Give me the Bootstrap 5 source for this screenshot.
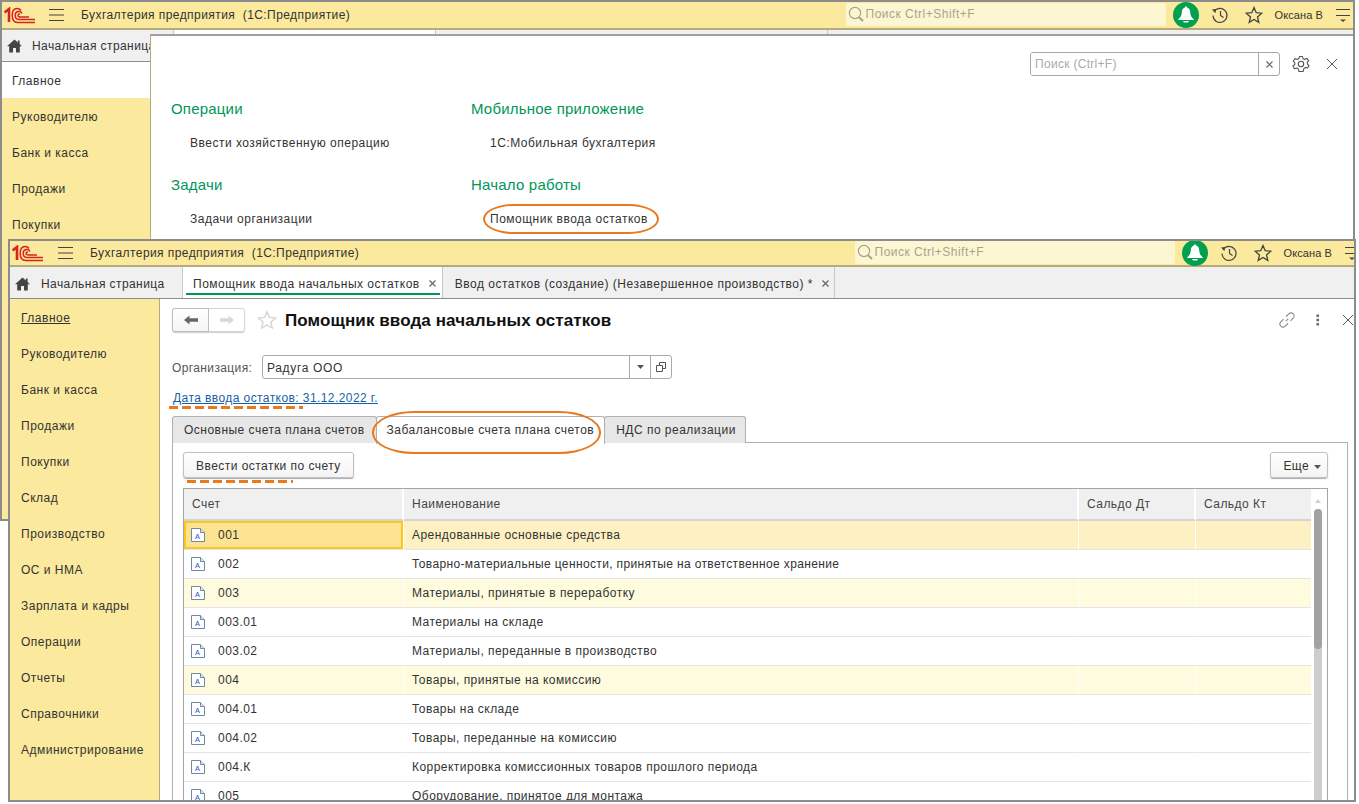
<!DOCTYPE html>
<html lang="ru">
<head>
<meta charset="utf-8">
<title>1С</title>
<link href="https://cdn.jsdelivr.net/npm/bootstrap@5.3.0/dist/css/bootstrap.min.css" rel="stylesheet">
<style>
html,body{height:804px;overflow:hidden;background:#fff}
body{position:relative;font-family:"Liberation Sans",Arial,sans-serif;font-size:12px;color:#333;letter-spacing:.5px;line-height:16px}
.appwin{position:absolute;border:2px solid #8c8c8c;background:#fff;overflow:hidden;display:flex;flex-direction:column}
.win-back{left:0;top:0;width:1355px;height:521px}
.win-front{left:8px;top:239px;width:1348px;height:563px}
.topbar{height:28px;flex:none;background:#fbe99d;border-bottom:2px solid #b5ab7c;display:flex;align-items:center}
.win-front .topbar{height:26px}
.brand{width:31px;height:17px;margin-left:2px;flex:none}
.burger{width:15px;height:12px;margin-left:15px;flex:none}
.win-back .burger{margin-left:14px}
.apptitle{margin-left:17px;color:#333;flex:1;white-space:nowrap;letter-spacing:.43px}
.gsearch{width:320px;height:23px;background:#fdf6d3;border-radius:2px;display:flex;align-items:center;padding-left:2px;color:#a8a48c;flex:none;margin-top:-2px}
.gsearch svg{width:17px;height:17px;flex:none;margin-right:1px}
.bell{width:26px;height:26px;flex:none;margin-left:7px;margin-top:-1px}
.tool{width:18px;height:18px;flex:none}
.hist{margin-left:12px}
.starbtn{margin-left:16px}
.uname{font-size:11px;letter-spacing:.1px;color:#333;white-space:nowrap;flex:none;margin-left:12px}
.sysbtn{width:16px;height:16px;margin-left:12px;margin-right:2px}
.win-front .sysbtn{margin-right:-6px}
.tabbar{height:32px;flex:none;background:#f0f0f0;border-bottom:1px solid #8c8c8c;display:flex;align-items:stretch}
.hometab{display:flex;align-items:center;padding-left:5px;width:173px;flex:none;border-right:1px solid #c8c8c8;white-space:nowrap;letter-spacing:.42px}
.win-back .hometab{width:172px}
.hometab svg{width:15px;height:14px;margin-right:11px;flex:none}
.win-back .hometab svg{margin-right:10px}
.opentab{display:flex;align-items:center;padding:0 5px 0 10px;white-space:nowrap;border-right:1px solid #c8c8c8;position:relative;background:#fff}
.win-front .hometab,.win-front .opentab{padding-top:2px}
.opentab.idle{background:#f0f0f0;padding-left:12px;padding-right:4px}
.strip-a{width:262px}
.strip-b{width:392px}
.opentab .tline{position:absolute;left:3px;right:2px;bottom:3px;height:2px;background:#00964f}
.opentab .cl{width:9px;height:9px;margin-left:8px;flex:none}
.appbody{flex:1;display:flex;min-height:0}
.sidemenu{flex:none;background:#fbe99d;border-right:1px solid #b5ab7c}
.sideitem{height:36px;display:flex;align-items:center;white-space:nowrap;color:#333;padding-top:2px}
.win-back .sideitem{padding-left:10px;width:150px}
.win-back .sideitem.current{background:#fff}
.win-front .sidemenu{width:150px}
.win-front .sideitem{padding-left:11px}
.sideitem u{text-decoration:underline}
.sectionpanel{position:absolute;left:148px;top:32px;right:0;bottom:0;background:#fff;border-top:2px solid #a0a0a0;border-left:1px solid #b5ab7c}
.panelfind{position:absolute;top:16px;left:879px;display:flex;align-items:center}
.findbox{width:250px;height:24px;border:1px solid #a8a8a8;border-radius:3px;display:flex;overflow:hidden}
.findbox input{flex:1;min-width:0;border:0;outline:0;padding:0 4px;font-size:12px;letter-spacing:.3px;color:#333;background:#fff}
.findbox input::placeholder{color:#aaa;opacity:1}
.findbox span{width:21px;border-left:1px solid #a8a8a8;display:flex;align-items:center;justify-content:center}
.gearbtn{width:18px;height:18px;margin-left:12px}
.closebtn{width:12px;height:12px;margin-left:16px}
.panelcols{display:flex;padding:63px 0 0 20px}
.panelcol{width:300px}
.grouphead{font-size:15px;letter-spacing:.2px;color:#00965a;line-height:20px;height:20px}
.groupitem{padding-left:19px;height:56px;padding-top:16px;white-space:nowrap}
.formarea{flex:1;min-width:0;padding:9px 0 0 12px;position:relative;display:flex;flex-direction:column}
.titlerow{display:flex;align-items:center;height:24px}
.navpair{display:flex;width:73px;height:24px;border:1px solid #d4d4d4;border-radius:3px;box-shadow:0 1px 1px #ccc;flex:none}
.navpair span{flex:1;display:flex;align-items:center;justify-content:center}
.navpair span:first-child{border:1px solid #bdbdbd;margin:-1px 0 -1px -1px;border-radius:3px 0 0 3px;background:linear-gradient(#fff,#f5f5f5)}
.formstar{width:20px;height:20px;margin-left:12px;flex:none}
.formtitle{font-size:17px;letter-spacing:.1px;font-weight:700;color:#111;margin-left:8px;white-space:nowrap;line-height:24px;padding-top:1px}
.titletools{margin-left:auto;display:flex;align-items:center}
.orgrow{display:flex;align-items:center;margin-top:23px;height:24px}
.orgrow label{width:90px;color:#555;flex:none;letter-spacing:.38px;padding-top:1px}
.orgbox{width:410px;height:24px;border:1px solid #aaa;border-radius:3px;display:flex;overflow:hidden;flex:none}
.orgbox b{flex:1;font-weight:400;padding-left:4px;line-height:24px;color:#333;letter-spacing:.65px}
.orgbox span{width:21px;border-left:1px solid #aaa;display:flex;align-items:center;justify-content:center}
.daterow{margin-top:11px;height:24px;margin-left:1px}
.daterow a{color:#155fa5;text-decoration:underline;white-space:nowrap;letter-spacing:.42px}
.tabs1c{margin:2px 0 0 0;height:27px;width:1176px;flex-wrap:nowrap;border-bottom:1px solid #b0b0b0;gap:0}
.tabs1c .nav-link{height:27px;padding:0 11px;line-height:26px;color:#333;background:#e7e7e7;border:1px solid #b0b0b0;border-bottom:0;border-radius:3px 3px 0 0;margin:0 -1px 0 0;white-space:nowrap;font-size:12px;letter-spacing:.48px}
.tabs1c .nav-item:last-child .nav-link{padding-right:9px}
.tabs1c .nav-link.active{background:#fff;color:#333;height:28px;border-color:#b0b0b0;padding:0 10px}
.tabpanel1c{width:1176px;flex:1;border:1px solid #b0b0b0;border-top:0;border-bottom:0;padding:9px 0 0 10px;min-height:0;display:flex;flex-direction:column;overflow:hidden}
.cmdrow{display:flex;justify-content:space-between;width:1145px;height:26px;flex:none}
.cmd1c.btn{height:26px;padding:1px 12px 0;font-size:12px;letter-spacing:.46px;color:#333;line-height:24px;border:1px solid #c0c0c0;border-radius:3px;background:linear-gradient(#fff,#f4f4f4);box-shadow:0 1px 1px #aaa}
.cmd1c.more{padding:1px 6px 0 12px}
.morecaret{width:7px;height:4px;vertical-align:middle;margin-left:1px}
.listframe{margin-top:10px;width:1145px;border:1px solid #a5a5a5;border-bottom:0;display:flex;flex:1;min-height:0;overflow:hidden}
.gridcol{flex:1;min-width:0}
.grid1c{table-layout:fixed;width:1129px;margin:0;border-collapse:separate;border-spacing:0;--bs-table-bg:transparent;font-size:12px;color:#333;letter-spacing:.46px}
.grid1c th,.grid1c td{height:29px;padding:0 0 0 8px;font-weight:400;border:0;border-bottom:1px solid #e4e4e4;border-right:1px solid #fff;vertical-align:middle;white-space:nowrap;color:#333;box-shadow:none;line-height:16px}
.grid1c th{height:32px;background:#f0f0f0;border-bottom:2px solid #d4d4d4;border-right:2px solid #fff;color:#444;padding-bottom:1px}
.grid1c td.tight{letter-spacing:.36px}
.grid1c tr.stripe td{background:#fefbde}
.grid1c tr.sel td{background:#fdf1c3}
.grid1c tr.sel td.focus{background:#fbe392;box-shadow:inset 0 0 0 2px #fcc61f}
.codecell{display:flex;align-items:center;margin-left:-1px}
.codecell svg{width:14px;height:14px;margin-right:13px;flex:none}
.scroll1c{width:16px;flex:none;position:relative;background:#fff}
.scroll1c .rail{position:absolute;left:3px;top:20px;bottom:0;width:8px;background:#cdcdcd;border-radius:4px 4px 0 0}
.scroll1c .thumb{position:absolute;left:3px;top:20px;height:140px;width:8px;background:#a2a2a2;border-radius:4px}
.scroll1c .arr{position:absolute;left:4px;top:10px;width:0;height:0;border:3px solid transparent;border-bottom:4px solid #d0d0d0;border-top:0}
.mark-ring{position:absolute;border:2px solid #e8791d;background:transparent;pointer-events:none}
.ring-a{left:483px;top:204px;width:176px;height:30px;border-radius:30px/15px}
.ring-b{left:372px;top:411px;width:229px;height:43px;border-radius:42px/21px}
.mark-dash{position:absolute;height:3px;background:repeating-linear-gradient(90deg,#e8791d 0 9px,transparent 9px 13px);pointer-events:none}
.dash-a{left:169px;top:406px;width:134px}
.dash-b{left:187px;top:480px;width:106px}
.svgdefs{position:absolute}
.linkbtn{width:16px;height:16px}
.dotsbtn{width:4px;height:12px;margin-left:21px}
.xbtn{width:12px;height:12px;margin-left:22px}
</style>
</head>
<body>
<svg width="0" height="0" class="svgdefs">
<defs>
<symbol id="logo1c" viewBox="0 0 31 17"><g fill="none" stroke="#d8231f" stroke-width="1.500"><path d="M0.500 5.500 5 2V15" stroke-width="2.600"/><path d="M17 3.500C16 2 14.500 1.400 13 1.400 10 1.400 8.200 4 8.200 8.200 8.200 12.600 10.200 15.400 13.500 15.400H31"/><path d="M18 6.500C17.500 5 15.800 4.200 14 4.600 12.200 5 11.200 6.400 11.200 8.200 11.200 10.800 13 12.600 15.500 12.600H31"/><path d="M14 8.200C14 9.400 15 10 16.400 10H25"/><path d="M14 8.200C14 7 15 6.800 16 7.200"/></g></symbol>
<symbol id="burger" viewBox="0 0 15 12"><path d="M0 .5H15M0 6H15M0 11.500H15" stroke="#444" stroke-width="1"/></symbol>
<symbol id="home" viewBox="0 0 15 14"><path d="M7.500 .5 0 7.200H2.200V13.500H6V9H9V13.500H12.800V7.200H15L12.600 5V1.500H10.800V3.400Z" fill="#444"/></symbol>
<symbol id="glass" viewBox="0 0 17 17"><circle cx="7" cy="7" r="5.600" fill="none" stroke="#a8a48c" stroke-width="1.200"/><path d="M11 11.200 15 15" stroke="#a8a48c" stroke-width="2"/></symbol>
<symbol id="bell" viewBox="0 0 26 26"><circle cx="13" cy="13" r="13" fill="#00a04f"/><path d="M13 4.500C12.200 4.500 11.800 5 11.800 5.600 9.800 6.200 8.900 8 8.800 10.200 8.600 13.600 7.300 15.800 5.300 17.300V18H20.700V17.300C18.700 15.800 17.400 13.600 17.200 10.200 17.100 8 16.200 6.200 14.200 5.600 14.200 5 13.800 4.500 13 4.500Z" fill="#fff"/><path d="M10 19H16L15 20.500H11Z" fill="#fff"/></symbol>
<symbol id="hist" viewBox="0 0 18 18"><path d="M3.200 5.500A7 7 0 1 1 2 9.500" fill="none" stroke="#444" stroke-width="1.200"/><path d="M1 3.500 5.200 3 4.400 7.200Z" fill="#444"/><path d="M9.500 5V9.500L12.500 11.500" fill="none" stroke="#444" stroke-width="1.200"/></symbol>
<symbol id="star" viewBox="0 0 18 18"><path d="M9 1.500 11.200 6.700 16.800 7.200 12.500 10.900 13.800 16.400 9 13.500 4.200 16.400 5.500 10.900 1.200 7.200 6.800 6.700Z" fill="none" stroke="#444" stroke-width="1.300"/></symbol>
<symbol id="starlight" viewBox="0 0 18 18"><path d="M9 1.500 11.200 6.700 16.800 7.200 12.500 10.900 13.800 16.400 9 13.500 4.200 16.400 5.500 10.900 1.200 7.200 6.800 6.700Z" fill="none" stroke="#d4d4d4" stroke-width="1.200"/></symbol>
<symbol id="sysmenu" viewBox="0 0 16 16"><path d="M1 2.500H15M1 8.500H15" stroke="#444" stroke-width="1"/><path d="M5 12.500H11L8 15Z" fill="#444"/></symbol>
<symbol id="xthin" viewBox="0 0 12 12"><path d="M1 1 11 11M11 1 1 11" stroke="#555" stroke-width="1"/></symbol>
<symbol id="xsmall" viewBox="0 0 9 9"><path d="M1.500 1.500 7.500 7.500M7.500 1.500 1.500 7.500" stroke="#666" stroke-width="1.200"/></symbol>
<symbol id="gear" viewBox="0 0 18 18"><path d="M7.500 1.500H10.500L11 3.700 12.800 4.500 14.800 3.300 16.700 5.600 15.200 7.200 15.500 9 17 10.600 15.500 13 13.400 12.400 11.800 13.800 11.200 16.500H7L6.300 13.900 4.700 13 2.400 13.700 1 11 2.800 9.500V7.800L1.200 6.200 3 3.600 5.200 4.500 6.900 3.600Z" fill="none" stroke="#555" stroke-width="1.100" stroke-linejoin="round"/><circle cx="9" cy="9" r="2.700" fill="none" stroke="#555" stroke-width="1.100"/></symbol>
<symbol id="clip" viewBox="0 0 16 16"><path d="M6.800 9.200 9.200 6.800M7 4.500 9.800 1.800C11 .7 13 .7 14.200 1.900 15.400 3.100 15.300 5 14.100 6.200L11.500 8.800M9 11.500 6.200 14.200C5 15.300 3 15.300 1.800 14.100 .6 12.900 .7 11 1.900 9.800L4.500 7.200" fill="none" stroke="#8a8a8a" stroke-width="1.100"/></symbol>
<symbol id="dots" viewBox="0 0 4 12"><path d="M.5 .5H3V3H.5ZM.5 4.700H3V7.200H.5ZM.5 8.900H3V11.400H.5Z" fill="#666"/></symbol>
<symbol id="larrow" viewBox="0 0 14 10"><path d="M0 5 5.500 .5V3.300H14V6.700H5.500V9.500Z" fill="#666"/></symbol>
<symbol id="rarrow" viewBox="0 0 14 10"><path d="M14 5 8.500 .5V3.300H0V6.700H8.500V9.500Z" fill="#d8d8d8"/></symbol>
<symbol id="caret" viewBox="0 0 7 4"><path d="M0 0H7L3.500 4Z" fill="#555"/></symbol>
<symbol id="open" viewBox="0 0 12 12"><path d="M1.500 4.500H7.500V10.500H1.500Z M4.500 4.500V1.500H10.500V7.500H7.500" fill="none" stroke="#555" stroke-width="1"/></symbol>
<symbol id="acct" viewBox="0 0 14 14"><path d="M.5 .5H9.500L13.500 4.500V13.500H.5Z" fill="#fff" stroke="#6f8aa3"/><path d="M9.500 .5V4.500H13.500" fill="#dfe7ee" stroke="#6f8aa3"/><text x="4" y="11" font-size="8" font-family="Liberation Mono" fill="#2d58d8" letter-spacing="0">A</text></symbol>
</defs>
</svg>

<section class="appwin win-back">
  <header class="topbar">
    <svg class="brand"><use href="#logo1c"/></svg>
    <svg class="burger"><use href="#burger"/></svg>
    <div class="apptitle">Бухгалтерия предприятия&nbsp; (1С:Предприятие)</div>
    <div class="gsearch"><svg><use href="#glass"/></svg><span>Поиск Ctrl+Shift+F</span></div>
    <svg class="bell"><use href="#bell"/></svg>
    <svg class="tool hist"><use href="#hist"/></svg>
    <svg class="tool starbtn"><use href="#star"/></svg>
    <span class="uname">Оксана В</span>
    <svg class="tool sysbtn"><use href="#sysmenu"/></svg>
  </header>
  <div class="tabbar">
    <div class="hometab"><svg><use href="#home"/></svg>Начальная страница</div>
    <div class="opentab strip-a"></div>
    <div class="opentab idle strip-b"></div>
  </div>
  <div class="appbody">
    <nav class="sidemenu">
      <div class="sideitem current">Главное</div>
      <div class="sideitem">Руководителю</div>
      <div class="sideitem">Банк и касса</div>
      <div class="sideitem">Продажи</div>
      <div class="sideitem">Покупки</div>
      <div class="sideitem">Склад</div>
      <div class="sideitem">Производство</div>
    </nav>
  </div>
  <div class="sectionpanel">
    <div class="panelfind">
      <div class="findbox"><input type="text" placeholder="Поиск (Ctrl+F)"><span><svg width="9" height="9"><use href="#xsmall"/></svg></span></div>
      <svg class="gearbtn"><use href="#gear"/></svg>
      <svg class="closebtn"><use href="#xthin"/></svg>
    </div>
    <div class="panelcols">
      <div class="panelcol">
        <div class="grouphead">Операции</div>
        <div class="groupitem">Ввести хозяйственную операцию</div>
        <div class="grouphead">Задачи</div>
        <div class="groupitem">Задачи организации</div>
      </div>
      <div class="panelcol">
        <div class="grouphead">Мобильное приложение</div>
        <div class="groupitem">1С:Мобильная бухгалтерия</div>
        <div class="grouphead">Начало работы</div>
        <div class="groupitem">Помощник ввода остатков</div>
      </div>
    </div>
  </div>
</section>

<section class="appwin win-front">
  <header class="topbar">
    <svg class="brand"><use href="#logo1c"/></svg>
    <svg class="burger"><use href="#burger"/></svg>
    <div class="apptitle">Бухгалтерия предприятия&nbsp; (1С:Предприятие)</div>
    <div class="gsearch"><svg><use href="#glass"/></svg><span>Поиск Ctrl+Shift+F</span></div>
    <svg class="bell"><use href="#bell"/></svg>
    <svg class="tool hist"><use href="#hist"/></svg>
    <svg class="tool starbtn"><use href="#star"/></svg>
    <span class="uname">Оксана В</span>
    <svg class="tool sysbtn"><use href="#sysmenu"/></svg>
  </header>
  <div class="tabbar">
    <div class="hometab"><svg><use href="#home"/></svg>Начальная страница</div>
    <div class="opentab">Помощник ввода начальных остатков<svg class="cl"><use href="#xsmall"/></svg><span class="tline"></span></div>
    <div class="opentab idle">Ввод остатков (создание) (Незавершенное производство) *<svg class="cl"><use href="#xsmall"/></svg></div>
  </div>
  <div class="appbody">
    <nav class="sidemenu">
      <div class="sideitem"><u>Главное</u></div>
      <div class="sideitem">Руководителю</div>
      <div class="sideitem">Банк и касса</div>
      <div class="sideitem">Продажи</div>
      <div class="sideitem">Покупки</div>
      <div class="sideitem">Склад</div>
      <div class="sideitem">Производство</div>
      <div class="sideitem">ОС и НМА</div>
      <div class="sideitem">Зарплата и кадры</div>
      <div class="sideitem">Операции</div>
      <div class="sideitem">Отчеты</div>
      <div class="sideitem">Справочники</div>
      <div class="sideitem">Администрирование</div>
    </nav>
    <main class="formarea">
      <div class="titlerow">
        <div class="navpair"><span><svg width="14" height="10"><use href="#larrow"/></svg></span><span><svg width="14" height="10"><use href="#rarrow"/></svg></span></div>
        <svg class="formstar"><use href="#starlight"/></svg>
        <div class="formtitle">Помощник ввода начальных остатков</div>
        <div class="titletools">
          <svg class="linkbtn"><use href="#clip"/></svg>
          <svg class="dotsbtn"><use href="#dots"/></svg>
          <svg class="xbtn"><use href="#xthin"/></svg>
        </div>
      </div>
      <div class="orgrow">
        <label>Организация:</label>
        <div class="orgbox"><b>Радуга ООО</b><span><svg width="7" height="4"><use href="#caret"/></svg></span><span><svg width="12" height="12"><use href="#open"/></svg></span></div>
      </div>
      <div class="daterow"><a href="#">Дата ввода остатков: 31.12.2022 г.</a></div>
      <ul class="nav nav-tabs tabs1c">
        <li class="nav-item"><a class="nav-link" href="#">Основные счета плана счетов</a></li>
        <li class="nav-item"><a class="nav-link active" href="#">Забалансовые счета плана счетов</a></li>
        <li class="nav-item"><a class="nav-link" href="#">НДС по реализации</a></li>
      </ul>
      <div class="tabpanel1c">
        <div class="cmdrow">
          <button class="btn cmd1c" type="button">Ввести остатки по счету</button>
          <button class="btn cmd1c more" type="button">Еще <svg class="morecaret"><use href="#caret"/></svg></button>
        </div>
        <div class="listframe">
          <div class="gridcol">
            <table class="table grid1c">
              <colgroup><col style="width:220px"><col style="width:675px"><col style="width:117px"><col style="width:117px"></colgroup>
              <thead><tr><th>Счет</th><th>Наименование</th><th>Сальдо Дт</th><th>Сальдо Кт</th></tr></thead>
              <tbody>
                <tr class="sel"><td class="focus"><div class="codecell"><svg><use href="#acct"/></svg>001</div></td><td>Арендованные основные средства</td><td></td><td></td></tr>
                <tr><td><div class="codecell"><svg><use href="#acct"/></svg>002</div></td><td class="tight">Товарно-материальные ценности, принятые на ответственное хранение</td><td></td><td></td></tr>
                <tr class="stripe"><td><div class="codecell"><svg><use href="#acct"/></svg>003</div></td><td>Материалы, принятые в переработку</td><td></td><td></td></tr>
                <tr><td><div class="codecell"><svg><use href="#acct"/></svg>003.01</div></td><td>Материалы на складе</td><td></td><td></td></tr>
                <tr><td><div class="codecell"><svg><use href="#acct"/></svg>003.02</div></td><td>Материалы, переданные в производство</td><td></td><td></td></tr>
                <tr class="stripe"><td><div class="codecell"><svg><use href="#acct"/></svg>004</div></td><td>Товары, принятые на комиссию</td><td></td><td></td></tr>
                <tr><td><div class="codecell"><svg><use href="#acct"/></svg>004.01</div></td><td>Товары на складе</td><td></td><td></td></tr>
                <tr><td><div class="codecell"><svg><use href="#acct"/></svg>004.02</div></td><td>Товары, переданные на комиссию</td><td></td><td></td></tr>
                <tr><td><div class="codecell"><svg><use href="#acct"/></svg>004.К</div></td><td>Корректировка комиссионных товаров прошлого периода</td><td></td><td></td></tr>
                <tr><td><div class="codecell"><svg><use href="#acct"/></svg>005</div></td><td>Оборудование, принятое для монтажа</td><td></td><td></td></tr>
              </tbody>
            </table>
          </div>
          <div class="scroll1c"><span class="arr"></span><span class="rail"></span><span class="thumb"></span></div>
        </div>
      </div>
    </main>
  </div>
</section>

<div class="mark-ring ring-a"></div>
<div class="mark-ring ring-b"></div>
<div class="mark-dash dash-a"></div>
<div class="mark-dash dash-b"></div>
</body>
</html>
